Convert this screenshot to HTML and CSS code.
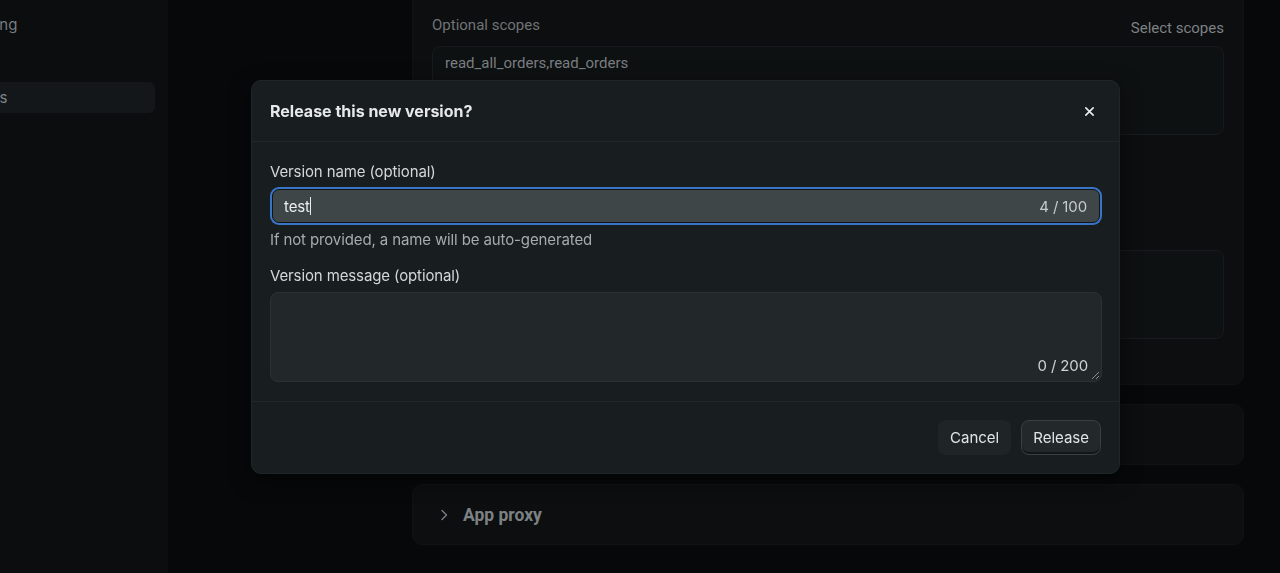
FILE: index.html
```html
<!DOCTYPE html>
<html lang="en">
<head>
  <meta charset="UTF-8" />
  <meta name="viewport" content="width=device-width, initial-scale=1" />
  <title>Release version</title>
  <link rel="stylesheet" href="styles.css">
</head>
<body>

  <div class="app">
    <aside class="sidebar">
      <nav class="nav">
        <div class="nav-group">
          <a class="nav-item nav-item-top">Monitoring</a>
        </div>
        <div class="nav-group">
          <a class="nav-item nav-item-active">Versions</a>
        </div>
      </nav>
    </aside>

    <main class="main">
      <div class="column">
        <section class="card card-top">
          <div class="field-head">
            <span class="field-label">Optional scopes</span>
            <span class="field-link">Select scopes</span>
          </div>
          <div class="bg-textarea">read_all_orders,read_orders</div>

          <div class="bg-textarea bg-textarea-second"></div>
        </section>

        <section class="card card-collapsed">
          <svg class="chevron-icon" viewBox="0 0 10 16" xmlns="http://www.w3.org/2000/svg">
            <path d="M3 3.5 L7.5 8 L3 12.5" fill="none" stroke="currentColor" stroke-width="1.4" stroke-linecap="round" stroke-linejoin="round"/>
          </svg>
        </section>

        <section class="card card-collapsed">
          <svg class="chevron-icon" viewBox="0 0 10 16" xmlns="http://www.w3.org/2000/svg">
            <path d="M3 3.5 L7.5 8 L3 12.5" fill="none" stroke="currentColor" stroke-width="1.4" stroke-linecap="round" stroke-linejoin="round"/>
          </svg>
          <span class="card-title">App proxy</span>
        </section>
      </div>
    </main>
  </div>

  <!-- modal -->
  <div class="backdrop">
    <div class="dialog">
      <div class="dialog-header">
        <h2 class="dialog-title">Release this new version?</h2>
        <button class="close-btn" aria-label="Close">
          <svg viewBox="0 0 12 12" xmlns="http://www.w3.org/2000/svg">
            <path d="M2 2 L10 10 M10 2 L2 10" stroke="currentColor" stroke-width="1.8" stroke-linecap="round"/>
          </svg>
        </button>
      </div>

      <div class="dialog-body">
        <label class="label">Version name (optional)</label>
        <div class="input input-focus">
          <span class="input-value">test<span class="caret"></span></span>
          <span class="counter">4 / 100</span>
        </div>
        <p class="help">If not provided, a name will be auto-generated</p>

        <label class="label label-second">Version message (optional)</label>
        <div class="textarea">
          <span class="counter counter-bottom">0 / 200</span>
          <span class="grip"></span>
        </div>
      </div>

      <div class="dialog-footer">
        <button class="btn btn-plain">Cancel</button>
        <button class="btn btn-primary">Release</button>
      </div>
    </div>
  </div>

</body>
</html>
```

FILE: styles.css
```css
body {
  margin: 0;
  background-color: #070809;
  font-family: Inter, "Noto Sans", sans-serif;
  font-size: 14px;
  overflow: hidden;
  height: 573px;
}

.app {
  display: flex;
  height: 573px;
}

/* left navigation, scrolled partly out of view */
.sidebar {
  width: 168px;
  flex-shrink: 0;
  background-color: #0b0d0e;
  overflow: hidden;
}

.nav {
  display: flex;
  flex-direction: column;
  gap: 41px;
  margin-left: -70px;
  padding-top: 9px;
  width: 225px;
}

.nav-item {
  display: block;
  height: 32px;
  line-height: 32px;
  padding-left: 16px;
  border-radius: 6px;
  color: #777c80;
  font-size: 15px;
}

.nav-item-top {
  padding-left: 11px;
}

.nav-item-active {
  height: 31px;
  line-height: 31px;
  background-color: #141719;
  color: #7e8386;
}

.main {
  flex: 1;
  padding-left: 244px;
  background-color: #070809;
}

.column {
  width: 832px;
  display: flex;
  flex-direction: column;
  gap: 19px;
}

.card {
  background-color: #0c0e0f;
  border: 1px solid #101314;
  border-radius: 10px;
  font-family: Roboto, "Liberation Sans", sans-serif;
}

.card-top {
  margin-top: -12px;
  padding: 21px 19px 10px 19px;
  height: 397px;
  box-sizing: border-box;
}

.field-head {
  display: flex;
  justify-content: space-between;
  align-items: flex-end;
  height: 24px;
  margin-bottom: 12px;
}

.field-label {
  color: #6f7477;
  font-size: 15px;
}

.field-link {
  color: #7d8184;
  font-size: 15px;
  margin-bottom: -3px;
}

.bg-textarea {
  height: 89px;
  box-sizing: border-box;
  background-color: #0e1112;
  border: 1px solid #171b1d;
  border-radius: 8px;
  padding: 6px 12px;
  color: #7a7e81;
  font-size: 15px;
  line-height: 20px;
}

.bg-textarea-second {
  margin-top: 115px;
}

.card-collapsed {
  height: 61px;
  box-sizing: border-box;
  display: flex;
  align-items: center;
  gap: 14px;
  padding-left: 26px;
}

.chevron-icon {
  width: 10px;
  height: 16px;
  color: #7a7f82;
}

.card-title {
  color: #7c8184;
  font-size: 17.5px;
  font-weight: 700;
}

/* modal */
.backdrop {
  position: fixed;
  inset: 0;
  padding: 80px 0 0 251px;
}

.dialog {
  width: 869px;
  box-sizing: border-box;
  background-color: #181d1f;
  border: 1px solid #202628;
  border-radius: 10px;
  box-shadow: 0 6px 20px rgba(0, 0, 0, 0.5);
  color: #e3e6e8;
}

.dialog-header {
  height: 60px;
  display: flex;
  align-items: center;
  justify-content: space-between;
  padding: 0 16px 0 18px;
  border-bottom: 1px solid #222829;
}

.dialog-title {
  margin: 0;
  font-size: 16px;
  font-weight: 700;
  color: #e6e8ea;
}

.close-btn {
  width: 28px;
  height: 28px;
  background: none;
  border: none;
  padding: 0;
  display: flex;
  align-items: center;
  justify-content: center;
  color: #e8eaeb;
  cursor: pointer;
}

.close-btn svg {
  width: 11px;
  height: 11px;
}

.dialog-body {
  padding: 20px 18px 19px 18px;
  border-bottom: 1px solid #222829;
  letter-spacing: -0.12px;
}

.label {
  display: block;
  line-height: 20px;
  font-size: 15px;
  color: #d4d7d9;
}

.label-second {
  margin-top: 16px;
}

.input {
  display: flex;
  align-items: center;
  justify-content: space-between;
  height: 34px;
  margin: 7px 1px 0 2px;
  box-sizing: border-box;
  padding: 0 12px 0 11px;
  background-color: #3f4648;
  border: 1px solid #101416;
  border-radius: 7px;
  font-size: 15px;
}

.input-focus {
  box-shadow: 0 0 0 2px #3a74c6;
}

.input-value {
  color: #eceeef;
  display: flex;
  align-items: center;
}

.caret {
  display: inline-block;
  width: 1px;
  height: 18px;
  background-color: #e8eaeb;
}

.counter {
  color: #c8cbcd;
  font-size: 15px;
}

.help {
  margin: 7px 0 0;
  line-height: 20px;
  font-size: 15px;
  color: #a6abae;
}

.textarea {
  position: relative;
  height: 90px;
  margin: 6px -1px 0 0;
  box-sizing: border-box;
  background-color: #222729;
  border: 1px solid #2c3234;
  border-radius: 8px;
  display: flex;
  align-items: flex-end;
  justify-content: flex-end;
  padding: 0 13px 6px 0;
}

.counter-bottom {
  color: #d0d3d5;
}

.grip {
  position: absolute;
  right: 2px;
  bottom: 2px;
  width: 7px;
  height: 7px;
  background: linear-gradient(135deg, transparent 45%, #8a8f92 45%, #8a8f92 55%, transparent 55%, transparent 75%, #8a8f92 75%, #8a8f92 85%, transparent 85%);
}

.dialog-footer {
  display: flex;
  justify-content: flex-end;
  gap: 10px;
  padding: 18px 18px 18px;
}

.btn {
  height: 35px;
  box-sizing: border-box;
  padding: 0 12px;
  border-radius: 8px;
  font-family: Inter, "Noto Sans", sans-serif;
  font-size: 15px;
  color: #e1e4e6;
  cursor: pointer;
}

.btn-plain {
  background-color: #1f2426;
  border: none;
}

.btn-primary {
  padding: 0 11px;
  background-color: #23292b;
  border: 1px solid #394043;
  box-shadow: inset 0 -2px 0 #121617;
}
```
